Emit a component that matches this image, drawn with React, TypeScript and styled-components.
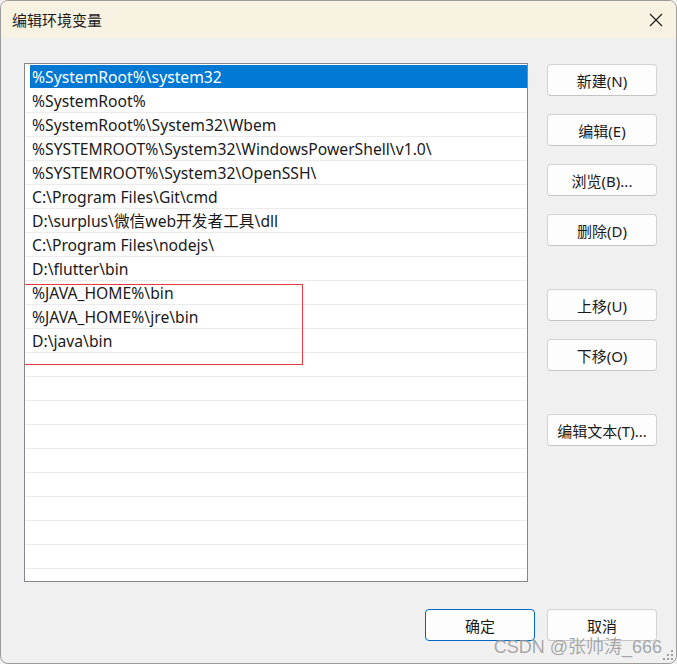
import React from "react";
import styled, { createGlobalStyle } from "styled-components";

const Global = createGlobalStyle`
  html, body { margin: 0; padding: 0; background: #f0f0f0; }
  * { box-sizing: border-box; }
`;

const FONT = `"Noto Sans", "Noto Sans CJK SC", sans-serif`;

const Window = styled.div`
  position: relative;
  width: 677px;
  height: 664px;
  border: 1px solid #9c9c9c;
  border-radius: 8px;
  background: #f0f0f0;
  overflow: hidden;
  display: flex;
  flex-direction: column;
  font-family: ${FONT};
  color: #1b1b1b;
`;

const TitleBar = styled.div`
  height: 37px;
  background: #f8f2e3;
  display: flex;
  align-items: center;
  justify-content: space-between;
  padding: 0 13px 0 11px;
`;

const Title = styled.div`
  font-size: 15px;
  font-family: "Noto Sans CJK SC", sans-serif;
  color: #1a1a1a;
`;

const Body = styled.div`
  display: flex;
  gap: 19px;
  padding: 25px 19px 0 23px;
`;

const ListBox = styled.div`
  position: relative;
  width: 504px;
  height: 519px;
  border: 1px solid #86868c;
  background: #ffffff;
  padding-top: 1px;
  overflow: hidden;
`;

const Row = styled.div<{ $selected?: boolean }>`
  height: 24px;
  border-bottom: 1px solid #ececec;
  display: flex;
  align-items: center;
  padding-left: 7px;
  font-size: 15.7px;
  white-space: nowrap;
  color: ${(p) => (p.$selected ? "#ffffff" : "#1a1a1a")};
  background: ${(p) =>
    p.$selected
      ? "linear-gradient(to right, #ffffff 5px, #0078d4 5px)"
      : "#ffffff"};
  border-bottom-color: ${(p) => (p.$selected ? "#ffffff" : "#ececec")};
`;

const Highlight = styled.div`
  position: absolute;
  left: -1px;
  top: 220px;
  width: 279px;
  height: 81px;
  border: 1px solid #e8383d;
  pointer-events: none;
`;

const Side = styled.div`
  display: flex;
  flex-direction: column;
  padding-top: 1px;
`;

const Button = styled.button<{ $gap?: number; $primary?: boolean }>`
  width: 110px;
  height: 32px;
  margin-top: ${(p) => p.$gap ?? 0}px;
  background: #fdfdfd;
  border: 1px solid ${(p) => (p.$primary ? "#0067c0" : "#d3d3d3")};
  border-bottom-color: ${(p) => (p.$primary ? "#0067c0" : "#c4c4c4")};
  border-radius: 4px;
  font-family: ${FONT};
  font-size: 15px;
  color: #1a1a1a;
  padding: 0;
  display: flex;
  align-items: center;
  justify-content: center;
`;

const Footer = styled.div`
  display: flex;
  justify-content: flex-end;
  gap: 12px;
  padding: 27px 19px 0 0;
`;

const Watermark = styled.div`
  position: absolute;
  right: 14px;
  bottom: 5px;
  font-family: "Liberation Sans", "Noto Sans CJK SC", sans-serif;
  font-size: 18px;
  color: rgba(90, 90, 90, 0.55);
  text-shadow: 0 0 1px rgba(255, 255, 255, 0.8);
  pointer-events: none;
`;

const Grip = styled.svg`
  position: absolute;
  right: 2px;
  bottom: 2px;
`;

const items = [
  "%SystemRoot%\\system32",
  "%SystemRoot%",
  "%SystemRoot%\\System32\\Wbem",
  "%SYSTEMROOT%\\System32\\WindowsPowerShell\\v1.0\\",
  "%SYSTEMROOT%\\System32\\OpenSSH\\",
  "C:\\Program Files\\Git\\cmd",
  "D:\\surplus\\微信web开发者工具\\dll",
  "C:\\Program Files\\nodejs\\",
  "D:\\flutter\\bin",
  "%JAVA_HOME%\\bin",
  "%JAVA_HOME%\\jre\\bin",
  "D:\\java\\bin",
];

const rows = [...items, ...Array(22 - items.length).fill("")];

export default function App() {
  return (
    <>
      <Global />
      <Window>
        <TitleBar>
          <Title>编辑环境变量</Title>
          <svg width="14" height="14" viewBox="0 0 14 14">
            <path d="M1 1 L13 13 M13 1 L1 13" stroke="#1a1a1a" strokeWidth="1.1" />
          </svg>
        </TitleBar>
        <Body>
          <ListBox>
            {rows.map((t, i) => (
              <Row key={i} $selected={i === 0}>
                {t}
              </Row>
            ))}
            <Highlight />
          </ListBox>
          <Side>
            <Button>新建(N)</Button>
            <Button $gap={18}>编辑(E)</Button>
            <Button $gap={18}>浏览(B)...</Button>
            <Button $gap={18}>删除(D)</Button>
            <Button $gap={43}>上移(U)</Button>
            <Button $gap={18}>下移(O)</Button>
            <Button $gap={43}>编辑文本(T)...</Button>
          </Side>
        </Body>
        <Footer>
          <Button $primary>确定</Button>
          <Button>取消</Button>
        </Footer>
        <Watermark>CSDN @张帅涛_666</Watermark>
        <Grip width="12" height="12" viewBox="0 0 12 12">
          {[
            [9, 1],
            [9, 5],
            [5, 5],
            [9, 9],
            [5, 9],
            [1, 9],
          ].map(([x, y], i) => (
            <rect key={i} x={x} y={y} width="2" height="2" fill="#a0a0a0" />
          ))}
        </Grip>
      </Window>
    </>
  );
}
